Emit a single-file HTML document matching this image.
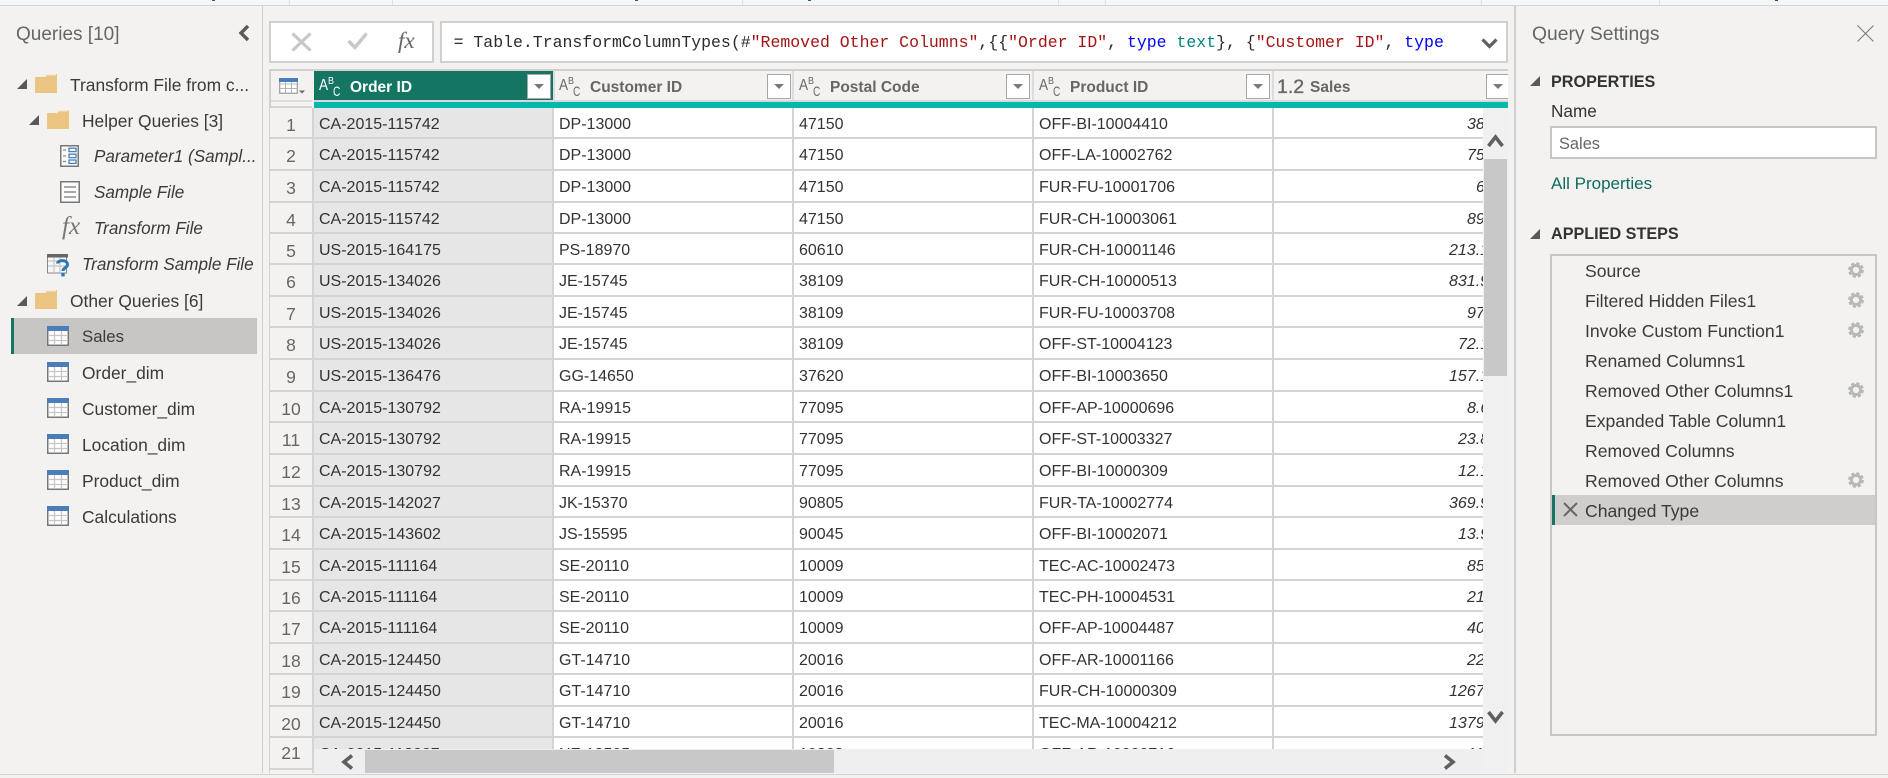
<!DOCTYPE html>
<html><head><meta charset="utf-8"><title>Power Query Editor</title>
<style>
html,body{margin:0;padding:0}
body{width:1888px;height:778px;overflow:hidden;background:#f3f2f1;position:relative;font-family:"Liberation Sans",sans-serif;color:#3b3a39}
div,span,svg{position:absolute;display:block}
svg{overflow:visible}
.t{white-space:nowrap;font-size:17.4px;line-height:24px;height:24px;margin-top:1px}
.i{font-style:italic;font-size:17.1px}
.hd{font-size:19px;line-height:26px;color:#666;white-space:nowrap}
.sec{font-size:16.2px;font-weight:bold;color:#333;line-height:22px;white-space:nowrap}
.st{left:1585px;font-size:17.6px;line-height:26px;white-space:nowrap;color:#3b3a39}
.r{position:absolute;left:0;width:1213px;box-sizing:border-box;border-bottom:2px solid #d4d4d4;background:#fff;font-size:16px;line-height:34px;white-space:nowrap;color:#333}
.r span{top:0;height:100%}
.n{left:0;width:42px;text-align:center;background:#f3f2f1;color:#666;font-size:17.5px}
.a{left:44px;width:233px;padding-left:5px;background:#e6e6e6}
.b{left:289px}.c{left:529px}.d{left:769px}
.s{font-style:italic}
.vl{top:0;width:2px;height:641px;background:#d4d4d4}
.hc{top:71px;height:29px;background:#f3f2f1}
.ht{top:76px;font-size:15.5px;font-weight:bold;color:#666;line-height:24px;white-space:nowrap}
.abc{top:0;left:0;color:#666;line-height:16px;transform-origin:0 50%}
.ab{width:24px;top:78px;height:18px}
.ab .p{font-size:16px;transform:scaleX(.85)}
.ab .q{font-size:10px;left:8.5px;top:-2.5px;line-height:12px;transform:scaleX(.9)}
.ab .w{font-size:14px;left:14px;top:4.5px;transform:scaleX(.72)}
.fb{top:74px;width:22px;height:23px;background:#fff;border:1px solid #a6a6a6}
.fb i{position:absolute;left:6px;top:9px;width:0;height:0;border-left:5px solid transparent;border-right:5px solid transparent;border-top:5px solid #7a7a7a}
.m{color:#a31515}.k{color:#0000ff}.x{color:#008080}
.tick{top:0;width:1px;height:5px;background:#e0e0e0}
</style></head><body>
<svg width="0" height="0" style="left:0;top:0">
<symbol id="tb" viewBox="0 0 22 20"><rect x=".75" y="4" width="20.5" height="15.25" fill="#fff" stroke="#777" stroke-width="1.5"/><path d="M1 9.5H21M1 14.5H21M7.5 5V19M14.5 5V19" stroke="#c4c4c4" stroke-width="1.2" fill="none"/><rect x="0" y="0" width="22" height="5" fill="#4a7ebb"/></symbol>
<symbol id="fo" viewBox="0 0 22 19"><path d="M0 3H9L11 0H22V19H0Z" fill="#ebc582"/><path d="M9.5 3.2L11.3 .8H21" fill="none" stroke="#fff" stroke-width=".8"/></symbol>
<symbol id="tr" viewBox="0 0 10 10"><path d="M10 0V10H0Z" fill="#595959"/></symbol>
<symbol id="ge" viewBox="0 0 16 16"><circle cx="8" cy="8" r="4.6" fill="none" stroke="#b8b8b8" stroke-width="3"/><circle cx="8" cy="8" r="6.6" fill="none" stroke="#b8b8b8" stroke-width="2.6" stroke-dasharray="3.2 2"/></symbol>
</svg>

<!-- top strip -->
<div style="left:0;top:0;width:1888px;height:5px;background:#f5f6f8"></div>
<div style="left:0;top:5px;width:1888px;height:1px;background:#d5d3d0"></div>
<div class="tick" style="left:289px"></div><div class="tick" style="left:392px"></div><div class="tick" style="left:742px"></div><div class="tick" style="left:1058px"></div><div class="tick" style="left:1105px"></div><div class="tick" style="left:1481px"></div><div class="tick" style="left:1659px"></div>
<div class="tick" style="left:212px;top:0;height:1px;width:3px;background:#555"></div><div class="tick" style="left:635px;height:1px;width:3px;background:#555"></div><div class="tick" style="left:808px;height:1px;width:3px;background:#137562"></div><div class="tick" style="left:1775px;height:1px;width:3px;background:#444"></div>

<!-- dividers -->
<div style="left:262px;top:6px;width:1px;height:767px;background:#d2d0ce"></div>
<div style="left:1514px;top:6px;width:2px;height:767px;background:#d2d0ce"></div>
<div style="left:0;top:774px;width:1888px;height:1px;background:#d5d3d0"></div>

<!-- left pane -->
<div class="hd" style="left:16px;top:22px">Queries [10]</div>
<svg style="left:238px;top:24px" width="12" height="18"><path d="M10 2L3 9L10 16" fill="none" stroke="#5a5a5a" stroke-width="3.4"/></svg>

<svg style="left:17px;top:79px" width="10" height="10"><use href="#tr"/></svg>
<svg style="left:35px;top:74px" width="22" height="19"><use href="#fo"/></svg>
<div class="t" style="left:70px;top:72px">Transform File from c...</div>
<svg style="left:29px;top:115px" width="10" height="10"><use href="#tr"/></svg>
<svg style="left:47px;top:110px" width="22" height="19"><use href="#fo"/></svg>
<div class="t" style="left:82px;top:108px">Helper Queries [3]</div>

<svg style="left:60px;top:145px" width="19" height="22"><rect x=".75" y=".75" width="17.5" height="20.5" fill="#fbfbfb" stroke="#777" stroke-width="1.5"/><path d="M3 5H6M3 11H6M3 16.5H6" stroke="#888" stroke-width="1.2"/><rect x="9" y="3.2" width="7" height="3.4" fill="none" stroke="#4a7ebb" stroke-width="1.3"/><rect x="9" y="9.2" width="7" height="3.4" fill="none" stroke="#4a7ebb" stroke-width="1.3"/><rect x="9" y="15" width="7" height="3.4" fill="none" stroke="#4a7ebb" stroke-width="1.3"/></svg>
<div class="t i" style="left:94px;top:144px">Parameter1 (Sampl...</div>
<svg style="left:60px;top:181px" width="20" height="22"><rect x=".75" y=".75" width="18.5" height="20.5" fill="#fbfbfb" stroke="#777" stroke-width="1.5"/><path d="M4 6H16M4 11H16M4 16H16" stroke="#777" stroke-width="1.3"/></svg>
<div class="t i" style="left:94px;top:180px">Sample File</div>
<div style="left:62px;top:212px;font:italic 25px/30px 'Liberation Serif',serif;color:#777;white-space:nowrap">fx</div>
<div class="t i" style="left:94px;top:216px">Transform File</div>
<svg style="left:47px;top:254px" width="24" height="23"><rect x=".5" y="2" width="19" height="17" fill="#f7f7f7" stroke="#888"/><path d="M1 7H20M1 12H20M7 3V19M13 3V19" stroke="#bdbdbd" stroke-width="1"/><rect x="0" y="0" width="21" height="3.5" fill="#666"/><path d="M10.5 9.5C11 5.5 20.5 5.5 20.5 10.5C20.5 14 16 13.5 16 17" fill="none" stroke="#2e75b6" stroke-width="3"/><rect x="14.3" y="19" width="3.4" height="3.4" fill="#2e75b6"/></svg>
<div class="t i" style="left:82px;top:252px">Transform Sample File</div>

<svg style="left:17px;top:296px" width="10" height="10"><use href="#tr"/></svg>
<svg style="left:35px;top:290px" width="22" height="19"><use href="#fo"/></svg>
<div class="t" style="left:70px;top:288px">Other Queries [6]</div>

<div style="left:11px;top:318px;width:246px;height:36px;background:#c8c6c4"></div>
<div style="left:11px;top:318px;width:3px;height:36px;background:#137562"></div>
<svg style="left:47px;top:326px" width="22" height="20"><use href="#tb"/></svg><div class="t" style="left:82px;top:324px;font-size:16.8px">Sales</div>
<svg style="left:47px;top:362px" width="22" height="20"><use href="#tb"/></svg><div class="t" style="left:82px;top:360px">Order_dim</div>
<svg style="left:47px;top:398px" width="22" height="20"><use href="#tb"/></svg><div class="t" style="left:82px;top:396px">Customer_dim</div>
<svg style="left:47px;top:434px" width="22" height="20"><use href="#tb"/></svg><div class="t" style="left:82px;top:432px">Location_dim</div>
<svg style="left:47px;top:470px" width="22" height="20"><use href="#tb"/></svg><div class="t" style="left:82px;top:468px">Product_dim</div>
<svg style="left:47px;top:506px" width="22" height="20"><use href="#tb"/></svg><div class="t" style="left:82px;top:504px">Calculations</div>

<!-- formula bar -->
<div style="left:269px;top:21px;width:161px;height:38px;background:#fff;border:2px solid #d2d0ce"></div>
<svg style="left:291px;top:32px" width="21" height="20"><path d="M1.5 1.5L19.5 18.5M19.5 1.5L1.5 18.5" stroke="#c8c8c8" stroke-width="3.2" fill="none"/></svg>
<svg style="left:347px;top:32px" width="21" height="18"><path d="M1.5 9L8 15.5L19.5 1.5" stroke="#c8c8c8" stroke-width="3.4" fill="none"/></svg>
<div style="left:398px;top:26px;font:italic 23px/30px 'Liberation Serif',serif;color:#666;white-space:nowrap">fx</div>
<div style="left:440px;top:21px;width:1064px;height:38px;background:#fff;border:2px solid #d2d0ce"></div>
<div style="left:453.6px;top:31px;font:16.5px/24px 'Liberation Mono',monospace;color:#2b2b2b;white-space:pre">= Table.TransformColumnTypes(#<span style="position:static;display:inline" class="m">"Removed Other Columns"</span>,{{<span style="position:static;display:inline" class="m">"Order ID"</span>, <span style="position:static;display:inline" class="k">type</span> <span style="position:static;display:inline" class="x">text</span>}, {<span style="position:static;display:inline" class="m">"Customer ID"</span>, <span style="position:static;display:inline" class="k">type</span></div>
<svg style="left:1481px;top:38px" width="17" height="11"><path d="M1.5 1.5L8.5 8.5L15.5 1.5" stroke="#606060" stroke-width="3.2" fill="none"/></svg>

<!-- table frame -->
<div style="left:269px;top:69px;width:1239px;height:2px;background:#d2d0ce"></div>
<div style="left:270px;top:71px;width:42px;height:29px;background:#f3f2f1"></div>
<svg style="left:279px;top:78px" width="27" height="16"><rect x=".75" y="1" width="17.5" height="14.2" fill="#fff" stroke="#8a8a8a"/><path d="M1 6H18M1 10.5H18M6.5 4V15M12.5 4V15" stroke="#b5b5b5" stroke-width="1"/><rect x="0" y="0" width="19" height="4" fill="#4a7ebb"/><path d="M20 12.5H26L23 15.5Z" fill="#666"/></svg>
<div style="left:270px;top:100px;width:42px;height:2px;background:#dcdcdc"></div>
<div style="left:270px;top:106px;width:42px;height:2px;background:#d4d4d4"></div>
<div style="left:269px;top:71px;width:2px;height:702px;background:#d2d0ce"></div>

<!-- header -->
<div class="hc" style="left:314px;width:239px;background:#137562;top:71px;height:30px"></div>
<div class="hc" style="left:553px;width:239px"></div><div class="hc" style="left:794px;width:238px"></div><div class="hc" style="left:1034px;width:238px"></div><div class="hc" style="left:1274px;width:234px"></div>
<div style="left:553px;top:71px;width:2px;height:31px;background:#dcdcdc"></div><div style="left:792px;top:71px;width:2px;height:31px;background:#dcdcdc"></div><div style="left:1032px;top:71px;width:2px;height:31px;background:#dcdcdc"></div><div style="left:1272px;top:71px;width:2px;height:31px;background:#dcdcdc"></div>
<div style="left:314px;top:100px;width:1194px;height:2px;background:#d8d8d8"></div>
<div style="left:314px;top:102px;width:1194px;height:6px;background:#02b8ac"></div>

<div class="ab" style="left:319px"><span class="abc p" style="color:#fff">A</span><span class="abc q" style="color:#fff">B</span><span class="abc w" style="color:#fff">C</span></div>
<div class="ht" style="left:350px;color:#fff">Order ID</div>
<div class="fb" style="left:527px"><i></i></div>
<div class="ab" style="left:559px"><span class="abc p">A</span><span class="abc q">B</span><span class="abc w">C</span></div>
<div class="ht" style="left:590px">Customer ID</div>
<div class="fb" style="left:767px"><i></i></div>
<div class="ab" style="left:799px"><span class="abc p">A</span><span class="abc q">B</span><span class="abc w">C</span></div>
<div class="ht" style="left:830px">Postal Code</div>
<div class="fb" style="left:1006px"><i></i></div>
<div class="ab" style="left:1039px"><span class="abc p">A</span><span class="abc q">B</span><span class="abc w">C</span></div>
<div class="ht" style="left:1070px">Product ID</div>
<div class="fb" style="left:1246px"><i></i></div>
<div style="left:1277px;top:75px;font-size:19.5px;line-height:24px;color:#666;white-space:nowrap;-webkit-text-stroke:.35px #666">1.2</div>
<div class="ht" style="left:1310px">Sales</div>
<div class="fb" style="left:1486px;width:21px;border-right:none"><i></i></div>

<!-- grid -->
<div style="left:270px;top:108px;width:1213px;height:665px;overflow:hidden;background:#fff">
<div class="r" style="top:0;height:31px"><span class="n">1</span><span class="a">CA-2015-115742</span><span class="b">DP-13000</span><span class="c">47150</span><span class="d">OFF-BI-10004410</span><span class="s" style="left:1197px">38.88</span></div>
<div class="r" style="top:31px;height:32px"><span class="n">2</span><span class="a">CA-2015-115742</span><span class="b">DP-13000</span><span class="c">47150</span><span class="d">OFF-LA-10002762</span><span class="s" style="left:1197px">75.18</span></div>
<div class="r" style="top:63px;height:32px"><span class="n">3</span><span class="a">CA-2015-115742</span><span class="b">DP-13000</span><span class="c">47150</span><span class="d">FUR-FU-10001706</span><span class="s" style="left:1206px">6.16</span></div>
<div class="r" style="top:95px;height:31px"><span class="n">4</span><span class="a">CA-2015-115742</span><span class="b">DP-13000</span><span class="c">47150</span><span class="d">FUR-CH-10003061</span><span class="s" style="left:1197px">89.99</span></div>
<div class="r" style="top:126px;height:31px"><span class="n">5</span><span class="a">US-2015-164175</span><span class="b">PS-18970</span><span class="c">60610</span><span class="d">FUR-CH-10001146</span><span class="s" style="left:1179px">213.11</span></div>
<div class="r" style="top:157px;height:32px"><span class="n">6</span><span class="a">US-2015-134026</span><span class="b">JE-15745</span><span class="c">38109</span><span class="d">FUR-CH-10000513</span><span class="s" style="left:1179px">831.94</span></div>
<div class="r" style="top:189px;height:31px"><span class="n">7</span><span class="a">US-2015-134026</span><span class="b">JE-15745</span><span class="c">38109</span><span class="d">FUR-FU-10003708</span><span class="s" style="left:1197px">97.04</span></div>
<div class="r" style="top:220px;height:32px"><span class="n">8</span><span class="a">US-2015-134026</span><span class="b">JE-15745</span><span class="c">38109</span><span class="d">OFF-ST-10004123</span><span class="s" style="left:1188px">72.13</span></div>
<div class="r" style="top:252px;height:32px"><span class="n">9</span><span class="a">US-2015-136476</span><span class="b">GG-14650</span><span class="c">37620</span><span class="d">OFF-BI-10003650</span><span class="s" style="left:1179px">157.11</span></div>
<div class="r" style="top:284px;height:31px"><span class="n">10</span><span class="a">CA-2015-130792</span><span class="b">RA-19915</span><span class="c">77095</span><span class="d">OFF-AP-10000696</span><span class="s" style="left:1197px">8.60</span></div>
<div class="r" style="top:315px;height:32px"><span class="n">11</span><span class="a">CA-2015-130792</span><span class="b">RA-19915</span><span class="c">77095</span><span class="d">OFF-ST-10003327</span><span class="s" style="left:1188px">23.88</span></div>
<div class="r" style="top:347px;height:32px"><span class="n">12</span><span class="a">CA-2015-130792</span><span class="b">RA-19915</span><span class="c">77095</span><span class="d">OFF-BI-10000309</span><span class="s" style="left:1188px">12.14</span></div>
<div class="r" style="top:379px;height:31px"><span class="n">13</span><span class="a">CA-2015-142027</span><span class="b">JK-15370</span><span class="c">90805</span><span class="d">FUR-TA-10002774</span><span class="s" style="left:1179px">369.91</span></div>
<div class="r" style="top:410px;height:32px"><span class="n">14</span><span class="a">CA-2015-143602</span><span class="b">JS-15595</span><span class="c">90045</span><span class="d">OFF-BI-10002071</span><span class="s" style="left:1188px">13.98</span></div>
<div class="r" style="top:442px;height:31px"><span class="n">15</span><span class="a">CA-2015-111164</span><span class="b">SE-20110</span><span class="c">10009</span><span class="d">TEC-AC-10002473</span><span class="s" style="left:1197px">85.98</span></div>
<div class="r" style="top:473px;height:31px"><span class="n">16</span><span class="a">CA-2015-111164</span><span class="b">SE-20110</span><span class="c">10009</span><span class="d">TEC-PH-10004531</span><span class="s" style="left:1197px">21.99</span></div>
<div class="r" style="top:504px;height:32px"><span class="n">17</span><span class="a">CA-2015-111164</span><span class="b">SE-20110</span><span class="c">10009</span><span class="d">OFF-AP-10004487</span><span class="s" style="left:1197px">40.99</span></div>
<div class="r" style="top:536px;height:31px"><span class="n">18</span><span class="a">CA-2015-124450</span><span class="b">GT-14710</span><span class="c">20016</span><span class="d">OFF-AR-10001166</span><span class="s" style="left:1197px">22.98</span></div>
<div class="r" style="top:567px;height:32px"><span class="n">19</span><span class="a">CA-2015-124450</span><span class="b">GT-14710</span><span class="c">20016</span><span class="d">FUR-CH-10000309</span><span class="s" style="left:1179px">1267.53</span></div>
<div class="r" style="top:599px;height:31px"><span class="n">20</span><span class="a">CA-2015-124450</span><span class="b">GT-14710</span><span class="c">20016</span><span class="d">TEC-MA-10004212</span><span class="s" style="left:1179px">1379.97</span></div>
<div class="r" style="top:630px;height:32px"><span class="n" style="line-height:31px">21</span><span class="a">CA-2015-118227</span><span class="b">NF-18595</span><span class="c">19808</span><span class="d">OFF-AR-10000716</span><span class="s" style="left:1197px">11.88</span></div>
<div class="r" style="top:662px;height:32px;border:none"><span class="n"></span></div>
<div class="vl" style="left:42px;height:665px"></div>
<div class="vl" style="left:282px"></div>
<div class="vl" style="left:522px"></div>
<div class="vl" style="left:762px"></div>
<div class="vl" style="left:1002px"></div>
<!-- h scrollbar -->
<div style="left:44px;top:641px;width:1169px;height:24px;background:#efefef"></div>
<div style="left:95px;top:642px;width:469px;height:23px;background:#c8c8c8"></div>
<svg style="left:70px;top:646px" width="14" height="16"><path d="M12 1.5L4 8L12 14.5" fill="none" stroke="#606060" stroke-width="3.6"/></svg>
<svg style="left:1173px;top:646px" width="14" height="16"><path d="M2 1.5L10 8L2 14.5" fill="none" stroke="#606060" stroke-width="3.6"/></svg>
</div>

<!-- v scrollbar -->
<div style="left:1483px;top:108px;width:25px;height:665px;background:#f0f0f0"></div>
<div style="left:1484px;top:159px;width:23px;height:217px;background:#c8c8c8"></div>
<svg style="left:1487px;top:134px" width="17" height="14"><path d="M1.5 12L8.5 3L15.5 12" fill="none" stroke="#606060" stroke-width="3.6"/></svg>
<svg style="left:1487px;top:710px" width="17" height="14"><path d="M1.5 2L8.5 11L15.5 2" fill="none" stroke="#606060" stroke-width="3.6"/></svg>

<!-- right pane -->
<div class="hd" style="left:1532px;top:22px;font-size:19.3px">Query Settings</div>
<svg style="left:1857px;top:25px" width="17" height="17"><path d="M.5 .5L16.5 16.5M16.5 .5L.5 16.5" stroke="#777" stroke-width="1" fill="none"/></svg>
<svg style="left:1530px;top:76px" width="10" height="10"><use href="#tr"/></svg>
<div class="sec" style="left:1551px;top:71px">PROPERTIES</div>
<div class="t" style="left:1551px;top:98px;font-size:17.2px;color:#333">Name</div>
<div style="left:1550px;top:126px;width:323px;height:29px;background:#fff;border:2px solid #c8c6c4"></div>
<div class="t" style="left:1559px;top:131px;color:#666;font-size:16.4px">Sales</div>
<div class="t" style="left:1551px;top:171px;color:#0f6b5f;font-size:17px">All Properties</div>
<svg style="left:1530px;top:229px" width="10" height="10"><use href="#tr"/></svg>
<div class="sec" style="left:1551px;top:223px">APPLIED STEPS</div>
<div style="left:1550px;top:254px;width:323px;height:478px;border:2px solid #c8c6c4"></div>
<div style="left:1552px;top:495px;width:323px;height:30px;background:#d0cecd"></div>
<div style="left:1552px;top:495px;width:3px;height:30px;background:#137562"></div>
<div class="st" style="top:258px">Source</div>
<div class="st" style="top:288px">Filtered Hidden Files1</div>
<div class="st" style="top:318px">Invoke Custom Function1</div>
<div class="st" style="top:348px">Renamed Columns1</div>
<div class="st" style="top:378px">Removed Other Columns1</div>
<div class="st" style="top:408px">Expanded Table Column1</div>
<div class="st" style="top:438px">Removed Columns</div>
<div class="st" style="top:468px">Removed Other Columns</div>
<div class="st" style="top:498px">Changed Type</div>
<svg style="left:1563px;top:502px" width="15" height="15"><path d="M1 1L14 14M14 1L1 14" stroke="#666" stroke-width="2" fill="none"/></svg>
<svg style="left:1848px;top:262px" width="16" height="16"><use href="#ge"/></svg>
<svg style="left:1848px;top:292px" width="16" height="16"><use href="#ge"/></svg>
<svg style="left:1848px;top:322px" width="16" height="16"><use href="#ge"/></svg>
<svg style="left:1848px;top:382px" width="16" height="16"><use href="#ge"/></svg>
<svg style="left:1848px;top:472px" width="16" height="16"><use href="#ge"/></svg>
</body></html>
